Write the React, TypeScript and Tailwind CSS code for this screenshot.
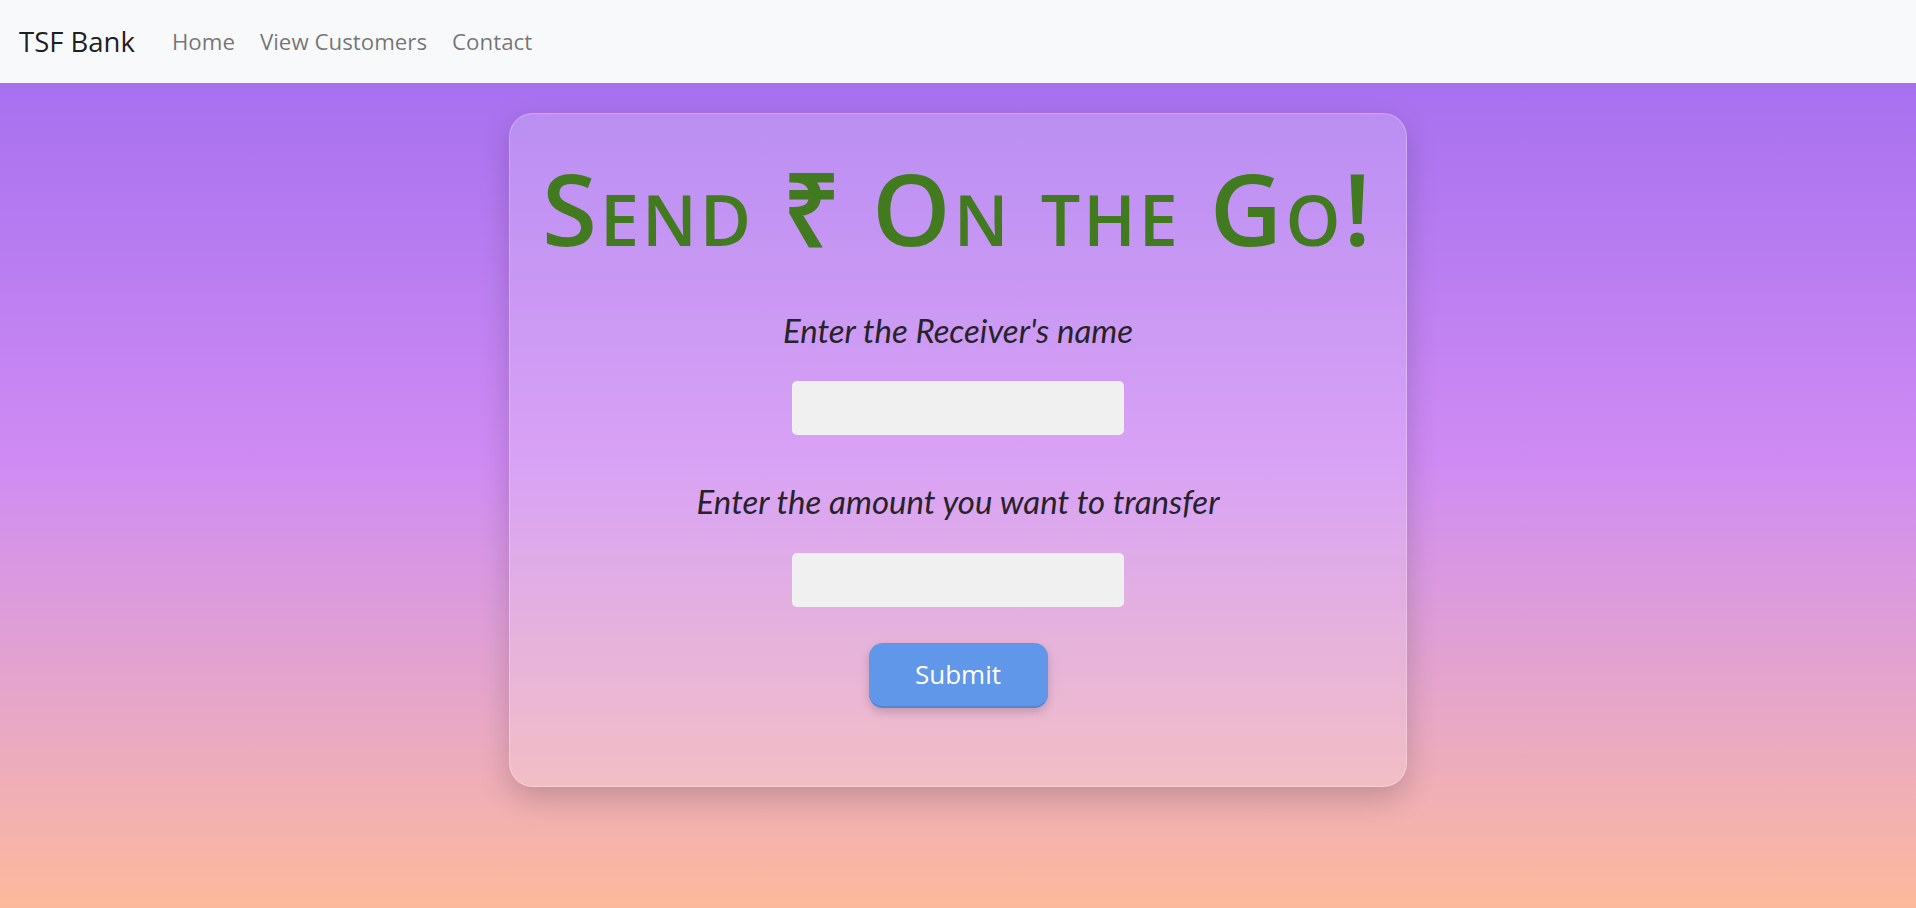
import React from "react";

export default function App() {
  return (
    <div className="min-h-screen flex flex-col font-['Open_Sans',sans-serif]">
      <nav className="h-[83px] shrink-0 bg-[#f8f9fa] flex items-center pl-[19px]">
        <span className="text-[27.5px] leading-[40px] text-black/90 mr-[37px]">TSF Bank</span>
        <div className="flex items-center gap-[25px] text-[22.3px] leading-[36px] text-black/55">
          <a href="#">Home</a>
          <a href="#">View Customers</a>
          <a href="#">Contact</a>
        </div>
      </nav>
      <main className="flex-1 bg-linear-to-b from-[#a770ef] via-[#cf8bf3] via-[46%] to-[#fdb99b] pt-[30px] pb-[40px]">
        <div className="mx-auto w-[898px] rounded-[24px] bg-white/20 border border-white/25 shadow-[0_12px_30px_rgba(0,0,0,0.18)] flex flex-col items-center pt-[33px] pb-[78px]">
          <h1 className="text-[100px] leading-[120px] font-semibold text-[#427b1f] [font-variant:small-caps] tracking-[3px] whitespace-nowrap">
            Send ₹ On the Go!
          </h1>
          <label className="mt-[41px] font-['Lato',sans-serif] italic text-[33px] leading-[44px] text-[#27232b]">
            Enter the Receiver's name
          </label>
          <input type="text" className="mt-[29px] w-[332px] h-[54px] rounded-[5px] bg-[#f0f0f0] outline-none" />
          <label className="mt-[44px] font-['Lato',sans-serif] italic text-[33px] leading-[44px] text-[#27232b]">
            Enter the amount you want to transfer
          </label>
          <input type="text" className="mt-[30px] w-[332px] h-[54px] rounded-[5px] bg-[#f0f0f0] outline-none" />
          <button className="mt-[36px] w-[179px] h-[65px] rounded-[14px] bg-[#6097e8] border-b-2 border-[#5286d6] text-white text-[26px] shadow-[0_4px_10px_rgba(0,0,0,0.18)]">
            Submit
          </button>
        </div>
      </main>
    </div>
  );
}
